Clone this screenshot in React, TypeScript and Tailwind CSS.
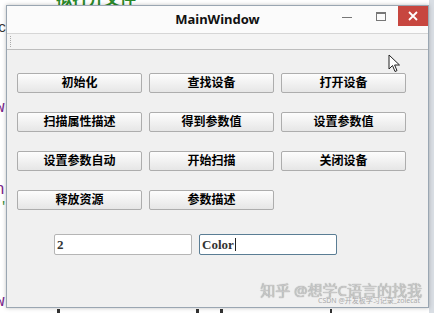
import React from 'react';

const buttons = [
  '初始化', '查找设备', '打开设备',
  '扫描属性描述', '得到参数值', '设置参数值',
  '设置参数自动', '开始扫描', '关闭设备',
  '释放资源', '参数描述',
];

const cjk = "font-['Noto_Sans','Noto_Sans_CJK_SC',sans-serif]";

function QtButton({ label }: { label: string }) {
  return (
    <button className={`h-[20px] rounded-[2px] border border-[#adadad] bg-gradient-to-b from-[#fdfdfd] to-[#e6e6e6] text-[12px] font-bold leading-none text-black ${cjk}`}>
      {label}
    </button>
  );
}

export default function App() {
  return (
    <div className="relative h-[313px] w-[434px] overflow-hidden bg-white">
      {/* editor behind the window */}
      <div className={`absolute left-[56px] top-[-13px] text-[16px] font-bold text-[#2a8a2a] ${cjk}`}>拟打开文件</div>
      <div className="absolute left-[-2px] top-[18px] font-['Liberation_Mono',monospace] text-[14px] text-[#333]">c</div>
      <div className="absolute left-[-5px] top-[96px] font-['Liberation_Mono',monospace] text-[16px] text-[#7a1f8a]">w</div>
      <div className="absolute left-[-5px] top-[178px] font-['Liberation_Mono',monospace] text-[16px] text-[#7a1f8a]">n</div>
      <div className="absolute left-[0px] top-[198px] font-['Liberation_Mono',monospace] text-[12px] text-[#2a8a2a]">'</div>
      <div className="absolute left-[-5px] top-[290px] font-['Liberation_Mono',monospace] text-[16px] text-[#7a1f8a]">w</div>
      <div className="absolute right-0 top-0 h-full w-[5px] bg-[#d9dee4]" />
      <div className="absolute left-[57px] top-[309px] h-[4px] w-[3px] bg-[#333]" />
      <div className="absolute left-[196px] top-[309px] h-[4px] w-[3px] bg-[#333]" />
      <div className="absolute left-[220px] top-[309px] h-[4px] w-[3px] bg-[#333]" />
      <div className="absolute left-[330px] top-[309px] h-[4px] w-[2px] bg-[#333]" />

      <div className="pl-[6px] pt-[5px]">
        <div className="relative flex h-[303px] w-[423px] flex-col border border-[#9aa6b2] bg-[#f0f0f0] shadow-[0_0_4px_rgba(0,0,0,0.25)]">
          {/* title bar */}
          <div className="relative flex h-[27px] items-center justify-center bg-[#fbfbfb]">
            <span className="font-['Noto_Sans',sans-serif] text-[13px] font-bold text-[#111]">MainWindow</span>
            <div className="absolute right-0 top-0 flex h-[20px] items-center">
              <div className="flex w-[34px] justify-center">
                <div className="mt-[3px] h-[1px] w-[10px] bg-[#777]" />
              </div>
              <div className="flex w-[34px] justify-center">
                <div className="h-[9px] w-[10px] border border-[#777] border-t-2" />
              </div>
              <div className="flex h-[20px] w-[30px] items-center justify-center bg-[#c7463f]">
                <svg width="10" height="10" viewBox="0 0 10 10">
                  <path d="M1 1L9 9M9 1L1 9" stroke="white" strokeWidth="1.8" />
                </svg>
              </div>
            </div>
          </div>
          {/* toolbar strip */}
          <div className="flex h-[17px] items-center border-y border-t-[#d6d6d6] border-b-[#bdbdbd] bg-[#f4f4f4] pl-[3px]">
            <div className="h-[11px] w-[3px] border-l border-dotted border-[#aaa]" />
          </div>

          {/* content */}
          <div className="flex flex-1 flex-col pl-[10px] pt-[23px]">
            <div className="grid w-[389px] grid-cols-3 gap-x-[7px] gap-y-[19px]">
              {buttons.map((b) => (
                <QtButton key={b} label={b} />
              ))}
            </div>
            <div className="ml-[37px] mt-[24px] flex gap-[7px]">
              <div className="flex h-[21px] w-[138px] items-center rounded-[2px] border border-[#b5b5b5] bg-white pl-[2px] font-['Liberation_Serif',serif] text-[13px] font-bold text-[#333]">
                2
              </div>
              <div className="flex h-[21px] w-[138px] items-center rounded-[2px] border border-[#5a7d94] bg-white pl-[2px] font-['Liberation_Serif',serif] text-[13px] font-bold text-[#333]">
                Color<span className="ml-[1px] h-[13px] w-[1px] bg-[#222]" />
              </div>
            </div>
          </div>

          {/* watermark */}
          <div className={`absolute bottom-[6px] right-[6px] text-[15px] text-[#c8c8c8] ${cjk} [text-shadow:0_0_1px_#888]`}>
            知乎 @想学C语言的找我
          </div>
          <div className={`absolute bottom-[1px] right-[8px] text-[7px] text-[#aaa] ${cjk}`}>
            CSDN @开发板学习记录_zoiecat
          </div>
        </div>
      </div>

      {/* mouse cursor */}
      <svg className="absolute left-[388px] top-[54px]" width="13" height="19" viewBox="0 0 13 19">
        <path d="M1 1L1 15L4.5 11.5L7 17.5L9 16.6L6.6 11L11.5 11Z" fill="white" stroke="#222" strokeWidth="1" strokeLinejoin="round" />
      </svg>
    </div>
  );
}
